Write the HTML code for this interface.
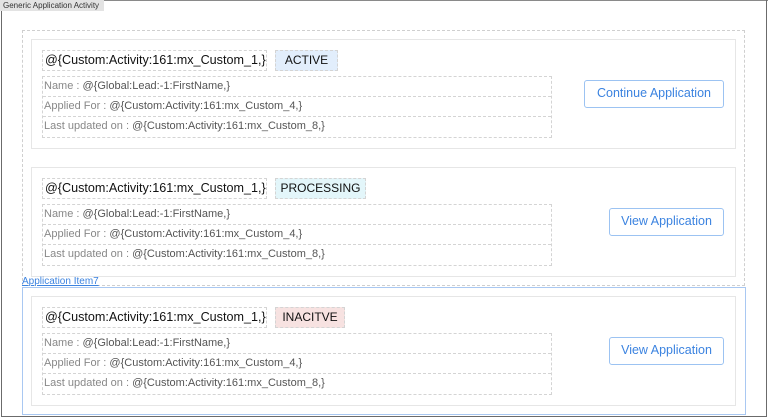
<!DOCTYPE html>
<html><head><style>
*{box-sizing:border-box;margin:0;padding:0}
body{width:768px;height:418px;background:#fff;font-family:"Liberation Sans",sans-serif;position:relative;overflow:hidden}
.abs{position:absolute}
.frame{left:1px;top:0;width:766px;height:417px;border:1px solid #6b6b6b;border-top:none}
.top{left:0;top:0;width:768px;height:1px;background:#8a8a8a}
.lbl{left:0;top:0;width:104px;height:11px;background:#e3e3e3;font-size:8px;color:#333;line-height:11px;padding-left:3px}
.dash{border:1px dashed #cfcfcf}
.card{border:1px solid #e6e6e6;background:#fff}
.title{font-size:12.6px;color:#111;line-height:19px;padding-left:2px;border:1px dashed #d4d4d4;white-space:nowrap;overflow:hidden}
.badge{font-size:12px;color:#111;line-height:19px;text-align:center;border:1px dashed #d4d4d4}
.rows{border:1px dashed #d4d4d4;width:510px}
.row{height:20px;font-size:11px;color:#888;line-height:19px;padding-left:1px;border-bottom:1px dashed #d4d4d4;white-space:nowrap}
.row:last-child{border-bottom:none}
.row b{font-weight:normal;color:#555}
.btn{border:1.5px solid #9cc3f2;border-radius:3px;color:#3b83e0;font-size:12.5px;text-align:center;line-height:25px}
</style></head><body>
<div class="abs top"></div>
<div class="abs frame"></div>
<div class="abs lbl">Generic Application Activity</div>
<div class="abs dash" style="left:22px;top:30px;width:723px;height:256px"></div>

<div class="abs card" style="left:31px;top:39px;width:705px;height:110px"></div>
<div class="abs title" style="left:42px;top:50px;width:225px;height:21px">@{Custom:Activity:161:mx_Custom_1,}</div>
<div class="abs badge" style="left:275px;top:50px;width:63px;height:21px;background:#e2eefc">ACTIVE</div>
<div class="abs rows" style="left:42px;top:76px">
<div class="row">Name : <b>@{Global:Lead:-1:FirstName,}</b></div>
<div class="row">Applied For : <b>@{Custom:Activity:161:mx_Custom_4,}</b></div>
<div class="row">Last updated on : <b>@{Custom:Activity:161:mx_Custom_8,}</b></div>
</div>
<div class="abs btn" style="left:584px;top:80px;width:140px;height:28px">Continue Application</div>

<div class="abs card" style="left:31px;top:167px;width:705px;height:110px"></div>
<div class="abs title" style="left:42px;top:178px;width:225px;height:21px">@{Custom:Activity:161:mx_Custom_1,}</div>
<div class="abs badge" style="left:275px;top:178px;width:91px;height:21px;background:#e3f6fa">PROCESSING</div>
<div class="abs rows" style="left:42px;top:204px">
<div class="row">Name : <b>@{Global:Lead:-1:FirstName,}</b></div>
<div class="row">Applied For : <b>@{Custom:Activity:161:mx_Custom_4,}</b></div>
<div class="row">Last updated on : <b>@{Custom:Activity:161:mx_Custom_8,}</b></div>
</div>
<div class="abs btn" style="left:609px;top:208px;width:115px;height:28px">View Application</div>

<div class="abs" style="left:22px;top:276px;font-size:10px;color:#3b83e0;text-decoration:underline;line-height:11px">Application Item7</div>
<div class="abs" style="left:22px;top:287px;width:724px;height:128px;border:1px solid #a9c8f2"></div>
<div class="abs card" style="left:31px;top:296px;width:705px;height:110px"></div>
<div class="abs title" style="left:42px;top:307px;width:225px;height:21px">@{Custom:Activity:161:mx_Custom_1,}</div>
<div class="abs badge" style="left:275px;top:307px;width:70px;height:21px;background:#f7e2e1">INACITVE</div>
<div class="abs rows" style="left:42px;top:333px">
<div class="row">Name : <b>@{Global:Lead:-1:FirstName,}</b></div>
<div class="row">Applied For : <b>@{Custom:Activity:161:mx_Custom_4,}</b></div>
<div class="row">Last updated on : <b>@{Custom:Activity:161:mx_Custom_8,}</b></div>
</div>
<div class="abs btn" style="left:609px;top:337px;width:115px;height:28px">View Application</div>
</body></html>
